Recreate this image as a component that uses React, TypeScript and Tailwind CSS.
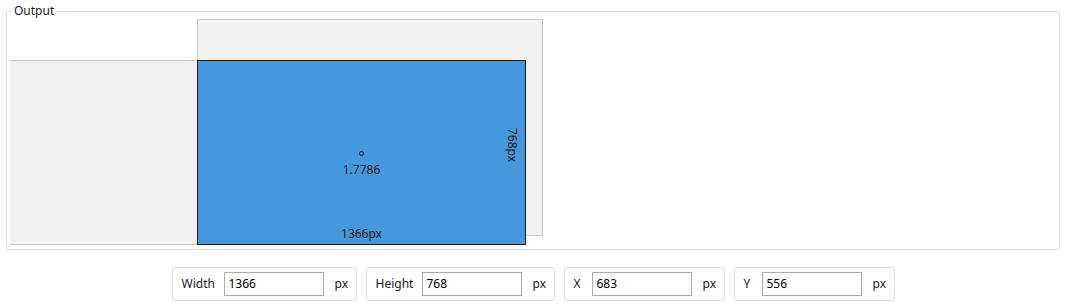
import React from "react";

const fields = [
  { label: "Width", value: "1366", w: "w-[31px]" },
  { label: "Height", value: "768", w: "w-[35px]" },
  { label: "X", value: "683", w: "w-[7px]" },
  { label: "Y", value: "556", w: "w-[7px]" },
];

export default function App() {
  return (
    <div className="w-[1066px] h-[306px] bg-white text-[12px] text-[#1a1a1a] font-['Noto_Sans',sans-serif]">
      <div className="pt-[3px] px-[6px]">
        {/* group box */}
        <fieldset className="h-[247px] border border-[#dcdfe5] rounded-[3px]">
          <legend className="ml-[5px] px-[2px] leading-[16px]">Output</legend>

          <div className="relative h-[229px]">
            <div className="absolute left-[3px] top-[41px] w-[190px] h-[185px] bg-[#f2f2f2] border-y border-[#c6c6c6]" />
            <div className="absolute left-[190px] top-0 w-[346px] h-[217px] bg-[#f2f2f2] border border-[#cacaca]" />
            {/* selected region */}
            <div className="absolute left-[190px] top-[41px] w-[329px] h-[185px] flex flex-col items-center pt-[90px] pb-[2px] bg-[#4698dc] border border-[#1c1c1c]">
              <div className="w-[5px] h-[5px] rounded-full border border-[#1c1c1c]" />
              <div className="mt-[6px] leading-[16px]">1.7786</div>
              <div className="mt-auto leading-[16px]">1366px</div>
              <div className="absolute right-[5px] top-[84px] w-[16px] h-0 flex items-center justify-center">
                <span className="rotate-90 leading-[16px] whitespace-nowrap">768px</span>
              </div>
            </div>
          </div>
        </fieldset>
      </div>

      {/* size / position inputs */}
      <div className="mt-[17px] flex justify-center gap-[9px]">
        {fields.map((f) => (
          <div
            key={f.label}
            className="h-[34px] flex items-center gap-[11px] px-[9px] border border-[#dde1e6] rounded-[3px]"
          >
            <span className={`${f.w} whitespace-nowrap`}>{f.label}</span>
            <div className="w-[100px] h-[24px] flex items-center pl-[4px] border border-[#acacac] text-black">
              {f.value}
            </div>
            <span className="w-[12px]">px</span>
          </div>
        ))}
      </div>
    </div>
  );
}
